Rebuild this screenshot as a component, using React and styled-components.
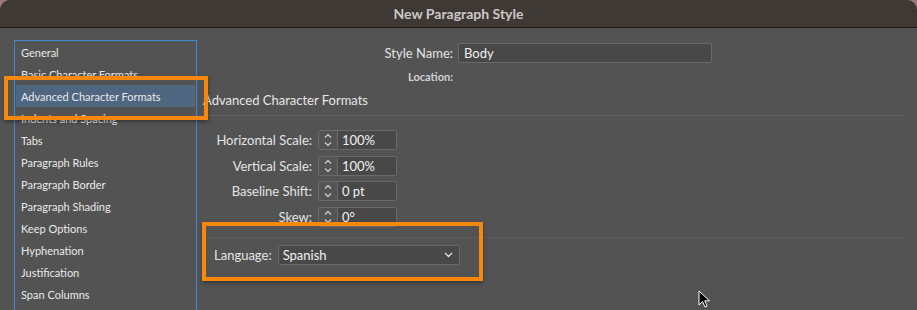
import React from "react";
import styled, { createGlobalStyle } from "styled-components";

const GlobalStyle = createGlobalStyle`
  html, body {
    margin: 0;
    padding: 0;
    background: #a0787c;
  }
  body {
    font-family: Lato, "Open Sans", sans-serif;
    -webkit-font-smoothing: antialiased;
  }
`;

const Window = styled.div`
  position: relative;
  width: 917px;
  height: 310px;
  display: flex;
  flex-direction: column;
  background: #535353;
  border-radius: 10px 10px 0 0;
  overflow: hidden;
`;

const TitleBar = styled.div`
  height: 27px;
  flex: none;
  display: flex;
  align-items: center;
  justify-content: center;
  background: #3f3936;
  border-bottom: 1px solid #1c1a19;
  color: #cdc8c6;
  font-size: 14px;
  font-weight: 700;
`;

const Body = styled.div`
  flex: 1;
  display: flex;
  padding: 12px 0 0 14px;
  border-left: 2px solid #5b5757;
  margin-left: -2px;
`;

const List = styled.div`
  width: 179px;
  flex: none;
  border: 1px solid #3d89d6;
  border-bottom: none;
  display: flex;
  flex-direction: column;
  padding: 0 1px;
`;

const ListItem = styled.div`
  height: 22px;
  flex: none;
  display: flex;
  align-items: center;
  padding-left: 5px;
  font-size: 11px;
  color: #e9e9e9;
  background: ${({ $active }) => ($active ? "#4e6680" : "transparent")};
`;

const Pane = styled.div`
  flex: 1;
  display: flex;
  flex-direction: column;
  padding-top: 3px;
`;

const TopGrid = styled.div`
  display: grid;
  grid-template-columns: 256px 254px;
  column-gap: 5px;
  row-gap: 7px;
  align-items: center;
`;

const Label = styled.span`
  text-align: right;
  white-space: nowrap;
  font-size: ${({ $small }) => ($small ? "11px" : "13px")};
  font-weight: ${({ $small }) => ($small ? 700 : 400)};
  color: ${({ $small }) => ($small ? "#d2d2d2" : "#e4e4e4")};
`;

const TextField = styled.div`
  height: 18px;
  display: flex;
  align-items: center;
  padding-left: 5px;
  background: #484848;
  border: 1px solid #6a6a6a;
  border-radius: 2px;
  font-size: 13px;
  color: #f0f0f0;
`;

const Heading = styled.div`
  margin: 9px 12px 0 6px;
  font-size: 13px;
  color: #e6e6e6;
  padding-bottom: 7px;
  border-bottom: 1px solid #5e5e5e;
`;

const Fields = styled.div`
  display: grid;
  grid-template-columns: 110px auto;
  column-gap: 6px;
  row-gap: 5.5px;
  margin: 14px 0 0 5px;
  align-items: center;
  justify-content: start;
`;

const Stepper = styled.div`
  display: flex;
  height: 20px;
  width: 79px;
  border: 1px solid #6a6a6a;
  border-radius: 2px;
  box-sizing: border-box;
`;

const StepButtons = styled.div`
  width: 18px;
  flex: none;
  display: flex;
  align-items: center;
  justify-content: center;
  border-right: 1px solid #6a6a6a;
`;

const StepValue = styled.div`
  flex: 1;
  display: flex;
  align-items: center;
  padding-left: 4px;
  background: #484848;
  font-size: 13px;
  color: #f0f0f0;
`;

const Group = styled.div`
  margin: 10px 12px 0 8px;
  padding: 7px 0 0 9px;
  border-top: 1px solid #5c5c5c;
  display: flex;
  align-items: center;
  gap: 6px;
`;

const Select = styled.div`
  width: 170px;
  height: 18px;
  display: flex;
  align-items: center;
  justify-content: space-between;
  padding: 0 6px 0 4px;
  background: #484848;
  border: 1px solid #6a6a6a;
  border-radius: 2px;
  font-size: 13px;
  color: #f0f0f0;
`;

const Highlight = styled.div`
  position: absolute;
  left: ${({ $x }) => $x}px;
  top: ${({ $y }) => $y}px;
  width: ${({ $w }) => $w}px;
  height: ${({ $h }) => $h}px;
  border: 4px solid #f8870f;
  box-sizing: border-box;
  box-shadow: 0 2px 4px rgba(0, 0, 0, 0.35);
  pointer-events: none;
`;

const Cursor = styled.svg`
  position: absolute;
  left: 698px;
  top: 290px;
`;

const ArrowIcons = () => (
  <svg width="10" height="16" viewBox="0 0 10 16">
    <path d="M2 5.5 L5 2.5 L8 5.5" fill="none" stroke="#d8d8d8" strokeWidth="1.1" />
    <path d="M2 10.5 L5 13.5 L8 10.5" fill="none" stroke="#d8d8d8" strokeWidth="1.1" />
  </svg>
);

const Chevron = () => (
  <svg width="9" height="6" viewBox="0 0 9 6">
    <path d="M1 1 L4.5 4.5 L8 1" fill="none" stroke="#e0e0e0" strokeWidth="1.3" />
  </svg>
);

const categories = [
  "General",
  "Basic Character Formats",
  "Advanced Character Formats",
  "Indents and Spacing",
  "Tabs",
  "Paragraph Rules",
  "Paragraph Border",
  "Paragraph Shading",
  "Keep Options",
  "Hyphenation",
  "Justification",
  "Span Columns",
];

const scaleFields = [
  { label: "Horizontal Scale:", value: "100%" },
  { label: "Vertical Scale:", value: "100%" },
  { label: "Baseline Shift:", value: "0 pt" },
  { label: "Skew:", value: "0°" },
];

function App() {
  return (
    <>
      <GlobalStyle />
      <Window>
        <TitleBar>New Paragraph Style</TitleBar>
        <Body>
          <List>
            {categories.map((name) => (
              <ListItem key={name} $active={name === "Advanced Character Formats"}>
                {name}
              </ListItem>
            ))}
          </List>
          <Pane>
            <TopGrid>
              <Label>Style Name:</Label>
              <TextField>Body</TextField>
              <Label $small>Location:</Label>
              <span />
            </TopGrid>
            <Heading>Advanced Character Formats</Heading>
            <Fields>
              {scaleFields.map((f) => (
                <React.Fragment key={f.label}>
                  <Label>{f.label}</Label>
                  <Stepper>
                    <StepButtons>
                      <ArrowIcons />
                    </StepButtons>
                    <StepValue>{f.value}</StepValue>
                  </Stepper>
                </React.Fragment>
              ))}
            </Fields>
            <Group>
              <Label>Language:</Label>
              <Select>
                Spanish
                <Chevron />
              </Select>
            </Group>
          </Pane>
        </Body>
        <Highlight $x={4} $y={76} $w={204} $h={44} />
        <Highlight $x={202} $y={222} $w={281} $h={59} />
        <Cursor width="13" height="19" viewBox="0 0 13 19">
          <path
            d="M1 1 L1 15 L4.5 11.5 L7 17 L9 16 L6.7 10.8 L11.5 10.8 Z"
            fill="#000"
            stroke="#fff"
            strokeWidth="1"
            strokeLinejoin="round"
          />
        </Cursor>
      </Window>
    </>
  );
}

export default App;
